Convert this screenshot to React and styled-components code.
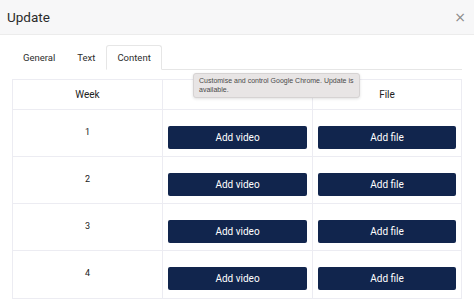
import React from 'react';
import styled, { createGlobalStyle } from 'styled-components';

const GlobalStyle = createGlobalStyle`
  html, body {
    margin: 0;
    padding: 0;
    background: #fff;
    font-family: Roboto, "Noto Sans", sans-serif;
    color: #212529;
  }
  * { box-sizing: border-box; }
`;

const Modal = styled.div`
  position: relative;
  width: 474px;
  height: 305px;
  overflow: hidden;
  background: #fff;
`;

const Header = styled.div`
  display: flex;
  align-items: center;
  justify-content: space-between;
  height: 35px;
  padding: 0 8px 0 7px;
  background: #f7f7f8;
  border-bottom: 1px solid #ececec;
`;

const Title = styled.h5`
  margin: 0;
  font-size: 13.5px;
  font-weight: 400;
  color: #2b2b2b;
`;

const Close = styled.button`
  border: 0;
  background: none;
  padding: 0;
  font-size: 14px;
  line-height: 1;
  color: #8a8a8a;
  font-family: "DejaVu Sans", sans-serif;
`;

const Body = styled.div`
  padding: 10px 12px 0 12px;
`;

const Tabs = styled.div`
  display: flex;
  height: 25px;
  border-bottom: 1px solid #e6e6e6;
`;

const Tab = styled.div`
  display: flex;
  align-items: center;
  padding: 0 10px;
  font-size: 9.5px;
  color: #2e2e2e;
  margin-bottom: -1px;
  border: 1px solid ${(p) => (p.active ? '#e6e6e6' : 'transparent')};
  border-bottom-color: ${(p) => (p.active ? '#fff' : 'transparent')};
  border-radius: 3px 3px 0 0;
  background: #fff;
`;

const Table = styled.div`
  margin-top: 9px;
  border: 1px solid #ececf2;
  display: grid;
  grid-template-columns: 150px 150px 148px;
`;

const HeadCell = styled.div`
  height: 30px;
  display: flex;
  align-items: center;
  justify-content: center;
  font-size: 10px;
  color: #222;
  border-right: ${(p) => (p.last ? '0' : '1px solid #ececf2')};
  border-bottom: 1px solid #ececf2;
`;

const Cell = styled.div`
  height: 47px;
  display: flex;
  align-items: center;
  justify-content: center;
  font-size: 9px;
  color: #222;
  padding: ${(p) => (p.week ? '0 0 1px 0' : '8px 5px 0 5px')};
  border-right: ${(p) => (p.last ? '0' : '1px solid #ececf2')};
  border-bottom: ${(p) => (p.bottom ? '0' : '1px solid #ececf2')};
`;

const WeekNum = styled.span`
  margin-top: -2px;
`;

const AddButton = styled.button`
  width: 100%;
  height: 23px;
  border: 0;
  border-radius: 2px;
  background: #11254d;
  color: #fff;
  font-family: Roboto, sans-serif;
  font-size: 10px;
`;

const Tooltip = styled.div`
  position: absolute;
  left: 193px;
  top: 73px;
  width: 167px;
  padding: 2px 5px 3px 5px;
  background: #e8e5e5;
  border: 1px solid #d6d3d3;
  border-radius: 3px;
  box-shadow: 0 1px 3px rgba(0, 0, 0, 0.12);
  font-family: "Liberation Sans", sans-serif;
  font-size: 7px;
  line-height: 9px;
  color: #4a4a4a;
`;

const weeks = [1, 2, 3, 4];

export default function App() {
  return (
    <Modal>
      <GlobalStyle />
      <Header>
        <Title>Update</Title>
        <Close>×</Close>
      </Header>
      <Body>
        <Tabs>
          <Tab>General</Tab>
          <Tab>Text</Tab>
          <Tab active>Content</Tab>
        </Tabs>
        <Table>
          <HeadCell>Week</HeadCell>
          <HeadCell>Video Link</HeadCell>
          <HeadCell last>File</HeadCell>
          {weeks.map((w) => (
            <React.Fragment key={w}>
              <Cell week bottom={w === 4}>
                <WeekNum>{w}</WeekNum>
              </Cell>
              <Cell bottom={w === 4}>
                <AddButton>Add video</AddButton>
              </Cell>
              <Cell last bottom={w === 4}>
                <AddButton>Add file</AddButton>
              </Cell>
            </React.Fragment>
          ))}
        </Table>
      </Body>
      <Tooltip>Customise and control Google Chrome. Update is available.</Tooltip>
    </Modal>
  );
}
